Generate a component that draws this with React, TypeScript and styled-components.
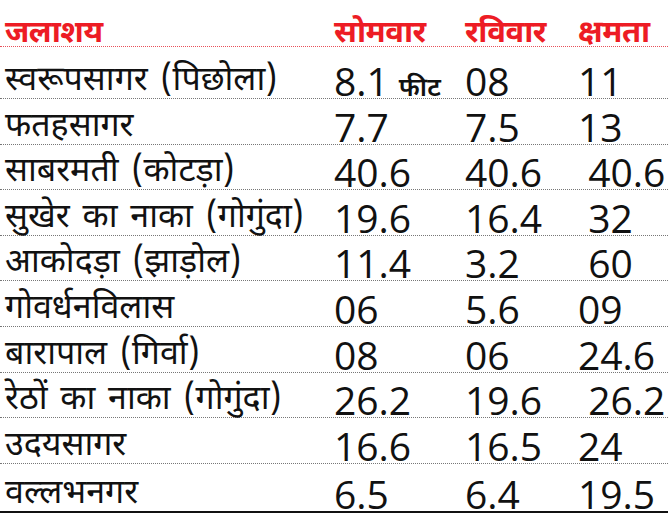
import React from 'react';
import styled, { createGlobalStyle } from 'styled-components';

interface Row {
  name: string;
  monday: string;
  unit?: string;
  sunday: string;
  capacity: string;
}

const rows: Row[] = [
  { name: 'स्वरूपसागर (पिछोला)', monday: '8.1', unit: 'फीट', sunday: '08', capacity: '11' },
  { name: 'फतहसागर', monday: '7.7', sunday: '7.5', capacity: '13' },
  { name: 'साबरमती (कोटड़ा)', monday: '40.6', sunday: '40.6', capacity: ' 40.6' },
  { name: 'सुखेर का नाका (गोगुंदा)', monday: '19.6', sunday: '16.4', capacity: ' 32' },
  { name: 'आकोदड़ा (झाड़ोल)', monday: '11.4', sunday: '3.2', capacity: ' 60' },
  { name: 'गोवर्धनविलास', monday: '06', sunday: '5.6', capacity: '09' },
  { name: 'बारापाल (गिर्वा)', monday: '08', sunday: '06', capacity: '24.6' },
  { name: 'रेठों का नाका (गोगुंदा)', monday: '26.2', sunday: '19.6', capacity: ' 26.2' },
  { name: 'उदयसागर', monday: '16.6', sunday: '16.5', capacity: '24' },
  { name: 'वल्लभनगर', monday: '6.5', sunday: '6.4', capacity: '19.5' },
];

const GlobalStyle = createGlobalStyle`
  html, body {
    margin: 0;
    padding: 0;
    background: #ffffff;
  }
  * {
    box-sizing: border-box;
  }
`;

const App: React.FC = () => {
  return (
    <>
      <GlobalStyle />
      <Table>
        <HeaderRow>
          <HeadCell>जलाशय</HeadCell>
          <HeadCell>सोमवार</HeadCell>
          <HeadCell>रविवार</HeadCell>
          <HeadCell>क्षमता</HeadCell>
        </HeaderRow>
        {rows.map((row, i) => (
          <DataRow key={row.name} first={i === 0} last={i === rows.length - 1}>
            <NameCell>{row.name}</NameCell>
            <ValueCell>
              {row.monday}
              {row.unit && <Unit>{row.unit}</Unit>}
            </ValueCell>
            <ValueCell>{row.sunday}</ValueCell>
            <ValueCell>{row.capacity}</ValueCell>
          </DataRow>
        ))}
      </Table>
    </>
  );
};

export default App;

const Table = styled.div`
  width: 668px;
  height: 516px;
  overflow: hidden;
  background: #fff;
`;

const columns = '329px 131px 113px 1fr';

const HeaderRow = styled.div`
  display: grid;
  grid-template-columns: ${columns};
  align-items: end;
  height: 47px;
  padding-left: 5px;
  border-bottom: 1px dotted #e8505a;
`;

const HeadCell = styled.div`
  font-family: 'Noto Sans Devanagari', 'Lohit Devanagari', 'Noto Sans', sans-serif;
  font-size: 31px;
  font-weight: 700;
  color: #ed1c24;
  line-height: 30px;
  letter-spacing: -0.5px;
  white-space: nowrap;
  margin-bottom: -4px;
`;

const DataRow = styled.div<{ first: boolean; last: boolean }>`
  display: grid;
  grid-template-columns: ${columns};
  align-items: end;
  height: ${({ first, last }) => (first ? '52px' : last ? '49px' : '45.6px')};
  padding-left: 5px;
  border-bottom: ${({ last }) => (last ? '2px solid #111' : '1px dotted #777')};
`;

const NameCell = styled.div`
  font-family: 'Noto Sans Devanagari', 'Lohit Devanagari', 'Noto Sans', sans-serif;
  font-size: 34px;
  color: #111;
  line-height: 34px;
  word-spacing: 4px;
  white-space: nowrap;
  margin-bottom: -1px;
`;

const ValueCell = styled.div`
  font-family: 'Open Sans', sans-serif;
  font-size: 39px;
  color: #111;
  line-height: 32px;
  white-space: pre;
  margin-bottom: 1px;
`;

const Unit = styled.span`
  font-family: 'Noto Sans Devanagari', 'Lohit Devanagari', 'Noto Sans', sans-serif;
  font-size: 26px;
  font-weight: 600;
  line-height: 0;
  margin-left: 10px;
`;
